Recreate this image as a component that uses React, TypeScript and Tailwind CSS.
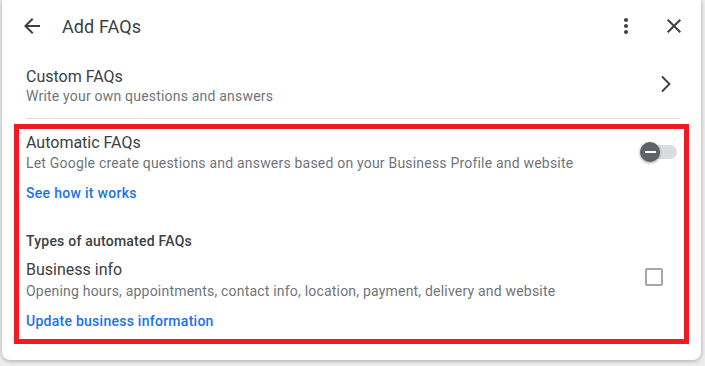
import React from "react";

function Icon({ d, className }: { d: string; className?: string }) {
  return (
    <svg viewBox="0 0 24 24" className={className} fill="currentColor">
      <path d={d} />
    </svg>
  );
}

const ARROW = "M20 11H7.83l5.59-5.59L12 4l-8 8 8 8 1.41-1.41L7.83 13H20v-2z";
const DOTS =
  "M12 8c1.1 0 2-.9 2-2s-.9-2-2-2-2 .9-2 2 .9 2 2 2zm0 2c-1.1 0-2 .9-2 2s.9 2 2 2 2-.9 2-2-.9-2-2-2zm0 6c-1.1 0-2 .9-2 2s.9 2 2 2 2-.9 2-2-.9-2-2-2z";
const CLOSE =
  "M19 6.41L17.59 5 12 10.59 6.41 5 5 6.41 10.59 12 5 17.59 6.41 19 12 13.41 17.59 19 19 17.59 13.41 12z";

function Toggle() {
  return (
    <div className="relative h-5 w-[38px]">
      <div className="absolute left-[4px] top-[3px] h-[14px] w-[33px] rounded-full bg-[#dadce0]" />
      <div className="absolute left-0 top-0 flex h-5 w-5 items-center justify-center rounded-full bg-[#5f6368] shadow-[0_1px_3px_rgba(0,0,0,0.4)]">
        <div className="h-[2px] w-[11px] bg-white" />
      </div>
    </div>
  );
}

export default function App() {
  return (
    <div
      className="h-[366px] w-[705px] overflow-hidden bg-[#ededed]"
      style={{ fontFamily: "Roboto, 'Liberation Sans', sans-serif" }}
    >
      <div className="ml-[2px] h-[360px] w-[699px] rounded-b-lg bg-white shadow-[0_1px_4px_rgba(0,0,0,0.3)]">
        {/* header */}
        <div className="flex h-[52px] items-center">
          <Icon d={ARROW} className="ml-[18px] h-6 w-6 text-[#3c4043]" />
          <span className="ml-[18px] text-[18px] tracking-[0.1px] text-[#3c4043]">Add FAQs</span>
          <Icon d={DOTS} className="ml-auto mt-[-1px] h-6 w-6 text-[#3c4043]" />
          <Icon d={CLOSE} className="ml-[24px] mr-[15px] h-6 w-6 text-[#3c4043]" />
        </div>

        {/* custom */}
        <div className="ml-6 mr-[21px] flex items-center border-b border-[#dadce0] pb-[12px] pt-[15px]">
          <div className="flex-1">
            <div className="text-[16px] leading-5 text-[#3c4043]">Custom FAQs</div>
            <div className="mt-[-1px] text-[14px] leading-5 tracking-[0.2px] text-[#70757a]">
              Write your own questions and answers
            </div>
          </div>
          <svg width="12" height="18" viewBox="0 0 12 18" className="mr-[8px] mt-[-6px]">
            <polyline points="2,1.5 9.5,9 2,16.5" fill="none" stroke="#3c4043" strokeWidth="1.8" />
          </svg>
        </div>

        {/* automatic (annotated) */}
        <div className="ml-[12px] mr-[12px] mt-[5px] border-[5px] border-[#ed1c24] pb-[8px] pl-[7px] pr-[11px] pt-[4px]">
          <div className="flex items-start">
            <div className="flex-1">
              <div className="text-[16px] leading-5 text-[#3c4043]">Automatic FAQs</div>
              <div className="text-[14px] leading-5 tracking-[0.2px] text-[#70757a]">
                Let Google create questions and answers based on your Business Profile and website
              </div>
            </div>
            <div className="mr-[-5px] mt-[9px]">
              <Toggle />
            </div>
          </div>
          <div className="mt-[10px] text-[14px] font-medium leading-5 tracking-[0.3px] text-[#1a73e8]">
            See how it works
          </div>

          <div className="mt-[28px] text-[14px] font-medium leading-5 tracking-[0.22px] text-[#3c4043]">
            Types of automated FAQs
          </div>
          <div className="mt-[9px] flex items-center">
            <div className="flex-1">
              <div className="text-[16px] leading-5 text-[#3c4043]">Business info</div>
              <div className="mt-[1px] text-[14px] leading-5 tracking-[0.2px] text-[#70757a]">
                Opening hours, appointments, contact info, location, payment, delivery and website
              </div>
            </div>
            <div className="mr-[10px] mt-[-8px] h-[18px] w-[18px] rounded-[2px] border-2 border-[#a6a6a6]" />
          </div>
          <div className="mt-[10px] text-[14px] font-medium leading-5 tracking-[0.26px] text-[#1a73e8]">
            Update business information
          </div>
        </div>
      </div>
    </div>
  );
}
